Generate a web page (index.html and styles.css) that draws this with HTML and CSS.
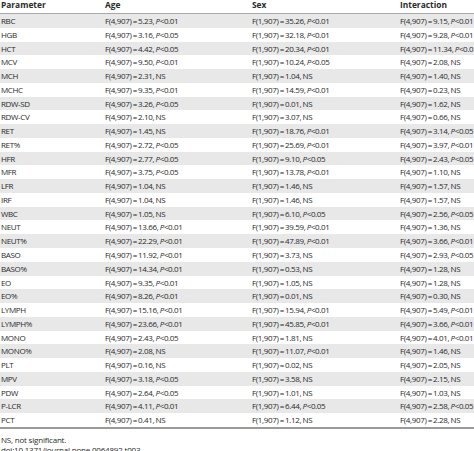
FILE: index.html
```html
<!DOCTYPE html>
<html>
<head>
<meta charset="utf-8">
<link rel="stylesheet" href="styles.css">
</head>
<body>
<div class="page">
<table class="tbl">
<thead>
<tr><th class="c1">Parameter</th><th class="c2">Age</th><th class="c3">Sex</th><th class="c4">Interaction</th></tr>
</thead>
<tbody>
<tr><td>RBC</td><td>F(4,907) = 5.23, <i>P</i>&lt;0.01</td><td>F(1,907) = 35.26, <i>P</i>&lt;0.01</td><td>F(4,907) = 9.15, <i>P</i>&lt;0.01</td></tr>
<tr><td>HGB</td><td>F(4,907) = 3.16, <i>P</i>&lt;0.05</td><td>F(1,907) = 32.18, <i>P</i>&lt;0.01</td><td>F(4,907) = 9.28, <i>P</i>&lt;0.01</td></tr>
<tr><td>HCT</td><td>F(4,907) = 4.42, <i>P</i>&lt;0.05</td><td>F(1,907) = 20.34, <i>P</i>&lt;0.01</td><td>F(4,907) = 11.34, <i>P</i>&lt;0.01</td></tr>
<tr><td>MCV</td><td>F(4,907) = 9.50, <i>P</i>&lt;0.01</td><td>F(1,907) = 10.24, <i>P</i>&lt;0.05</td><td>F(4,907) = 2.08, NS</td></tr>
<tr><td>MCH</td><td>F(4,907) = 2.31, NS</td><td>F(1,907) = 1.04, NS</td><td>F(4,907) = 1.40, NS</td></tr>
<tr><td>MCHC</td><td>F(4,907) = 9.35, <i>P</i>&lt;0.01</td><td>F(1,907) = 14.59, <i>P</i>&lt;0.01</td><td>F(4,907) = 0.23, NS</td></tr>
<tr><td>RDW-SD</td><td>F(4,907) = 3.26, <i>P</i>&lt;0.05</td><td>F(1,907) = 0.01, NS</td><td>F(4,907) = 1.62, NS</td></tr>
<tr><td>RDW-CV</td><td>F(4,907) = 2.10, NS</td><td>F(1,907) = 3.07, NS</td><td>F(4,907) = 0.66, NS</td></tr>
<tr><td>RET</td><td>F(4,907) = 1.45, NS</td><td>F(1,907) = 18.76, <i>P</i>&lt;0.01</td><td>F(4,907) = 3.14, <i>P</i>&lt;0.05</td></tr>
<tr><td>RET%</td><td>F(4,907) = 2.72, <i>P</i>&lt;0.05</td><td>F(1,907) = 25.69, <i>P</i>&lt;0.01</td><td>F(4,907) = 3.97, <i>P</i>&lt;0.01</td></tr>
<tr><td>HFR</td><td>F(4,907) = 2.77, <i>P</i>&lt;0.05</td><td>F(1,907) = 9.10, <i>P</i>&lt;0.05</td><td>F(4,907) = 2.43, <i>P</i>&lt;0.05</td></tr>
<tr><td>MFR</td><td>F(4,907) = 3.75, <i>P</i>&lt;0.05</td><td>F(1,907) = 13.78, <i>P</i>&lt;0.01</td><td>F(4,907) = 1.10, NS</td></tr>
<tr><td>LFR</td><td>F(4,907) = 1.04, NS</td><td>F(1,907) = 1.46, NS</td><td>F(4,907) = 1.57, NS</td></tr>
<tr><td>IRF</td><td>F(4,907) = 1.04, NS</td><td>F(1,907) = 1.46, NS</td><td>F(4,907) = 1.57, NS</td></tr>
<tr><td>WBC</td><td>F(4,907) = 1.05, NS</td><td>F(1,907) = 6.10, <i>P</i>&lt;0.05</td><td>F(4,907) = 2.56, <i>P</i>&lt;0.05</td></tr>
<tr><td>NEUT</td><td>F(4,907) = 13.66, <i>P</i>&lt;0.01</td><td>F(1,907) = 39.59, <i>P</i>&lt;0.01</td><td>F(4,907) = 1.36, NS</td></tr>
<tr><td>NEUT%</td><td>F(4,907) = 22.29, <i>P</i>&lt;0.01</td><td>F(1,907) = 47.89, <i>P</i>&lt;0.01</td><td>F(4,907) = 3.66, <i>P</i>&lt;0.01</td></tr>
<tr><td>BASO</td><td>F(4,907) = 11.92, <i>P</i>&lt;0.01</td><td>F(1,907) = 3.73, NS</td><td>F(4,907) = 2.93, <i>P</i>&lt;0.05</td></tr>
<tr><td>BASO%</td><td>F(4,907) = 14.34, <i>P</i>&lt;0.01</td><td>F(1,907) = 0.53, NS</td><td>F(4,907) = 1.28, NS</td></tr>
<tr><td>EO</td><td>F(4,907) = 9.35, <i>P</i>&lt;0.01</td><td>F(1,907) = 1.05, NS</td><td>F(4,907) = 1.28, NS</td></tr>
<tr><td>EO%</td><td>F(4,907) = 8.26, <i>P</i>&lt;0.01</td><td>F(1,907) = 0.01, NS</td><td>F(4,907) = 0.30, NS</td></tr>
<tr><td>LYMPH</td><td>F(4,907) = 15.16, <i>P</i>&lt;0.01</td><td>F(1,907) = 15.94, <i>P</i>&lt;0.01</td><td>F(4,907) = 5.49, <i>P</i>&lt;0.01</td></tr>
<tr><td>LYMPH%</td><td>F(4,907) = 23.66, <i>P</i>&lt;0.01</td><td>F(1,907) = 45.85, <i>P</i>&lt;0.01</td><td>F(4,907) = 3.66, <i>P</i>&lt;0.01</td></tr>
<tr><td>MONO</td><td>F(4,907) = 2.43, <i>P</i>&lt;0.05</td><td>F(1,907) = 1.81, NS</td><td>F(4,907) = 4.01, <i>P</i>&lt;0.01</td></tr>
<tr><td>MONO%</td><td>F(4,907) = 2.08, NS</td><td>F(1,907) = 11.07, <i>P</i>&lt;0.01</td><td>F(4,907) = 1.46, NS</td></tr>
<tr><td>PLT</td><td>F(4,907) = 0.16, NS</td><td>F(1,907) = 0.02, NS</td><td>F(4,907) = 2.05, NS</td></tr>
<tr><td>MPV</td><td>F(4,907) = 3.18, <i>P</i>&lt;0.05</td><td>F(1,907) = 3.58, NS</td><td>F(4,907) = 2.15, NS</td></tr>
<tr><td>PDW</td><td>F(4,907) = 2.64, <i>P</i>&lt;0.05</td><td>F(1,907) = 1.01, NS</td><td>F(4,907) = 1.03, NS</td></tr>
<tr><td>P-LCR</td><td>F(4,907) = 4.11, <i>P</i>&lt;0.01</td><td>F(1,907) = 6.44, <i>P</i>&lt;0.05</td><td>F(4,907) = 2.58, <i>P</i>&lt;0.05</td></tr>
<tr><td>PCT</td><td>F(4,907) = 0.41, NS</td><td>F(1,907) = 1.12, NS</td><td>F(4,907) = 2.28, NS</td></tr>
</tbody>
</table>
<div class="notes">
<div class="note">NS, not significant.</div>
<div class="note">doi:10.1371/journal.pone.0064892.t003</div>
</div>
</div>
</body>
</html>
```

FILE: styles.css
```css
html, body {
  margin: 0;
  padding: 0;
  background: #fff;
  overflow: hidden;
}
.page {
  width: 474px;
  font-family: "Open Sans", "Liberation Sans", sans-serif;
  font-size: 8px;
  color: #2a2a2a;
}
.tbl {
  border-collapse: collapse;
  table-layout: fixed;
  width: 474px;
  border-bottom: 2px solid #9a9a9a;
}
.c1 { width: 103px; }
.c2 { width: 146px; }
.c3 { width: 147px; }
.c4 { width: 78px; }
.tbl th {
  text-align: left;
  font-weight: bold;
  font-size: 8.4px;
  height: 11px;
  line-height: 9px;
  padding: 0 0 2px 1px;
  vertical-align: top;
  border-bottom: 1px solid #a8a8a8;
}
.tbl td {
  height: 13.77px;
  padding: 0 0 0 1px;
  line-height: 13.77px;
  white-space: nowrap;
  vertical-align: middle;
  letter-spacing: -0.35px;
  word-spacing: -0.5px;
}
.tbl tbody tr:nth-child(odd) td {
  background: #e8e8e8;
}
.notes {
  padding: 6px 0 0 1px;
  letter-spacing: -0.2px;
}
.note {
  line-height: 10px;
  height: 10px;
}
```
